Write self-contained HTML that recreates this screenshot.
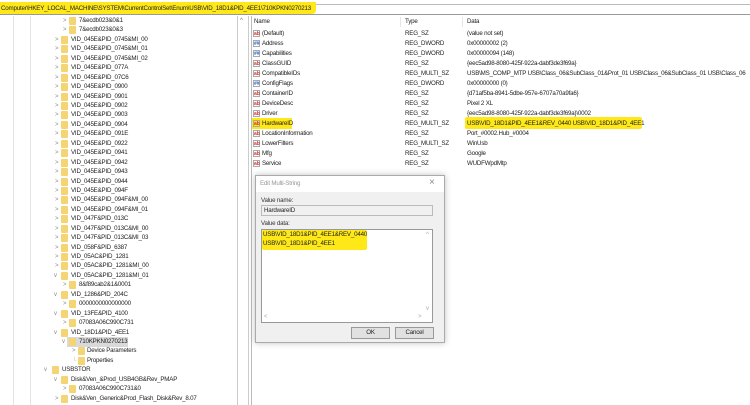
<!DOCTYPE html>
<html><head><meta charset="utf-8"><style>
body{margin:0;width:750px;height:405px;overflow:hidden;background:#fff;font-family:"Liberation Sans",sans-serif;font-size:6.2px;letter-spacing:-0.2px;color:#222;position:relative}
.a{position:absolute;white-space:nowrap}
.r{position:absolute;height:10px;line-height:10px;white-space:nowrap;left:0;width:236px}
.ch{position:absolute;color:#888;font-size:6px}
.f{position:absolute;top:1px;width:7px;height:8px;background:#f5d474;border-radius:1px}
.t{position:absolute}
.v{position:absolute;left:0;right:0;height:10px;line-height:10px;white-space:nowrap;overflow:hidden}
.ic{position:absolute;left:253px;top:1px;width:7px;height:7px;font-size:5px;line-height:7px;color:#c33;border:0.5px solid #aaa;box-sizing:border-box;text-align:center;font-weight:bold;letter-spacing:0}
.ic.b{color:#36c}
.n{position:absolute;left:262px}.ty{position:absolute;left:405px}.d{position:absolute;left:467px}
.hl{background:#ffe818}
</style></head><body>
<div class="a" style="left:0;top:4px;width:750px;height:11px;border-top:1px solid #bbb;border-bottom:1px solid #999;box-sizing:border-box"></div>
<div class="a hl" style="left:0;top:2px;width:316px;height:12px;border-radius:0 0 4px 0"></div>
<div class="a" style="left:1px;top:4px;line-height:10px">Computer\HKEY_LOCAL_MACHINE\SYSTEM\CurrentControlSet\Enum\USB\VID_18D1&amp;PID_4EE1\710KPKN0270213</div>
<div class="a" style="left:13px;top:16px;width:1px;height:389px;background:#e4e4e4"></div>
<div class="a" style="left:30px;top:16px;width:1px;height:389px;background:#e4e4e4"></div>
<div class="a" style="left:237px;top:16px;width:1px;height:389px;background:#ccc"></div>
<div class="a" style="left:240px;top:18px;color:#777;font-size:6px">^</div>
<div class="a" style="left:248px;top:16px;width:1px;height:389px;background:#ccc"></div>
<div class="a" style="left:251px;top:16px;width:1px;height:389px;background:#bbb"></div>

<div class="r" style="top:16px"><span class="ch" style="left:63px">&gt;</span><span class="f" style="left:69px"></span><span class="t" style="left:79px">7&amp;ecdb023&amp;0&amp;1</span></div>
<div class="r" style="top:25.4px"><span class="ch" style="left:63px">&gt;</span><span class="f" style="left:69px"></span><span class="t" style="left:79px">7&amp;ecdb023&amp;0&amp;3</span></div>
<div class="r" style="top:34.9px"><span class="ch" style="left:55px">&gt;</span><span class="f" style="left:61px"></span><span class="t" style="left:71px">VID_045E&amp;PID_0745&amp;MI_00</span></div>
<div class="r" style="top:44.3px"><span class="ch" style="left:55px">&gt;</span><span class="f" style="left:61px"></span><span class="t" style="left:71px">VID_045E&amp;PID_0745&amp;MI_01</span></div>
<div class="r" style="top:53.8px"><span class="ch" style="left:55px">&gt;</span><span class="f" style="left:61px"></span><span class="t" style="left:71px">VID_045E&amp;PID_0745&amp;MI_02</span></div>
<div class="r" style="top:63.2px"><span class="ch" style="left:55px">&gt;</span><span class="f" style="left:61px"></span><span class="t" style="left:71px">VID_045E&amp;PID_077A</span></div>
<div class="r" style="top:72.6px"><span class="ch" style="left:55px">&gt;</span><span class="f" style="left:61px"></span><span class="t" style="left:71px">VID_045E&amp;PID_07C6</span></div>
<div class="r" style="top:82.1px"><span class="ch" style="left:55px">&gt;</span><span class="f" style="left:61px"></span><span class="t" style="left:71px">VID_045E&amp;PID_0900</span></div>
<div class="r" style="top:91.5px"><span class="ch" style="left:55px">&gt;</span><span class="f" style="left:61px"></span><span class="t" style="left:71px">VID_045E&amp;PID_0901</span></div>
<div class="r" style="top:101px"><span class="ch" style="left:55px">&gt;</span><span class="f" style="left:61px"></span><span class="t" style="left:71px">VID_045E&amp;PID_0902</span></div>
<div class="r" style="top:110.4px"><span class="ch" style="left:55px">&gt;</span><span class="f" style="left:61px"></span><span class="t" style="left:71px">VID_045E&amp;PID_0903</span></div>
<div class="r" style="top:119.8px"><span class="ch" style="left:55px">&gt;</span><span class="f" style="left:61px"></span><span class="t" style="left:71px">VID_045E&amp;PID_0904</span></div>
<div class="r" style="top:129.3px"><span class="ch" style="left:55px">&gt;</span><span class="f" style="left:61px"></span><span class="t" style="left:71px">VID_045E&amp;PID_091E</span></div>
<div class="r" style="top:138.7px"><span class="ch" style="left:55px">&gt;</span><span class="f" style="left:61px"></span><span class="t" style="left:71px">VID_045E&amp;PID_0922</span></div>
<div class="r" style="top:148.2px"><span class="ch" style="left:55px">&gt;</span><span class="f" style="left:61px"></span><span class="t" style="left:71px">VID_045E&amp;PID_0941</span></div>
<div class="r" style="top:157.6px"><span class="ch" style="left:55px">&gt;</span><span class="f" style="left:61px"></span><span class="t" style="left:71px">VID_045E&amp;PID_0942</span></div>
<div class="r" style="top:167px"><span class="ch" style="left:55px">&gt;</span><span class="f" style="left:61px"></span><span class="t" style="left:71px">VID_045E&amp;PID_0943</span></div>
<div class="r" style="top:176.5px"><span class="ch" style="left:55px">&gt;</span><span class="f" style="left:61px"></span><span class="t" style="left:71px">VID_045E&amp;PID_0944</span></div>
<div class="r" style="top:185.9px"><span class="ch" style="left:55px">&gt;</span><span class="f" style="left:61px"></span><span class="t" style="left:71px">VID_045E&amp;PID_094F</span></div>
<div class="r" style="top:195.4px"><span class="ch" style="left:55px">&gt;</span><span class="f" style="left:61px"></span><span class="t" style="left:71px">VID_045E&amp;PID_094F&amp;MI_00</span></div>
<div class="r" style="top:204.8px"><span class="ch" style="left:55px">&gt;</span><span class="f" style="left:61px"></span><span class="t" style="left:71px">VID_045E&amp;PID_094F&amp;MI_01</span></div>
<div class="r" style="top:214.2px"><span class="ch" style="left:55px">&gt;</span><span class="f" style="left:61px"></span><span class="t" style="left:71px">VID_047F&amp;PID_013C</span></div>
<div class="r" style="top:223.7px"><span class="ch" style="left:55px">&gt;</span><span class="f" style="left:61px"></span><span class="t" style="left:71px">VID_047F&amp;PID_013C&amp;MI_00</span></div>
<div class="r" style="top:233.1px"><span class="ch" style="left:55px">&gt;</span><span class="f" style="left:61px"></span><span class="t" style="left:71px">VID_047F&amp;PID_013C&amp;MI_03</span></div>
<div class="r" style="top:242.6px"><span class="ch" style="left:55px">&gt;</span><span class="f" style="left:61px"></span><span class="t" style="left:71px">VID_058F&amp;PID_6387</span></div>
<div class="r" style="top:252px"><span class="ch" style="left:55px">&gt;</span><span class="f" style="left:61px"></span><span class="t" style="left:71px">VID_05AC&amp;PID_1281</span></div>
<div class="r" style="top:261.4px"><span class="ch" style="left:55px">&gt;</span><span class="f" style="left:61px"></span><span class="t" style="left:71px">VID_05AC&amp;PID_1281&amp;MI_00</span></div>
<div class="r" style="top:270.9px"><span class="ch" style="left:54px">v</span><span class="f" style="left:61px"></span><span class="t" style="left:71px">VID_05AC&amp;PID_1281&amp;MI_01</span></div>
<div class="r" style="top:280.3px"><span class="ch" style="left:63px">&gt;</span><span class="f" style="left:69px"></span><span class="t" style="left:79px">8&amp;f89cab2&amp;1&amp;0001</span></div>
<div class="r" style="top:289.8px"><span class="ch" style="left:54px">v</span><span class="f" style="left:61px"></span><span class="t" style="left:71px">VID_1286&amp;PID_204C</span></div>
<div class="r" style="top:299.2px"><span class="ch" style="left:63px">&gt;</span><span class="f" style="left:69px"></span><span class="t" style="left:79px">0000000000000000</span></div>
<div class="r" style="top:308.6px"><span class="ch" style="left:54px">v</span><span class="f" style="left:61px"></span><span class="t" style="left:71px">VID_13FE&amp;PID_4100</span></div>
<div class="r" style="top:318.1px"><span class="ch" style="left:63px">&gt;</span><span class="f" style="left:69px"></span><span class="t" style="left:79px">07083A06C990C731</span></div>
<div class="r" style="top:327.5px"><span class="ch" style="left:54px">v</span><span class="f" style="left:61px"></span><span class="t" style="left:71px">VID_18D1&amp;PID_4EE1</span></div>
<div class="r" style="top:337px"><span class="a" style="left:67px;top:0;width:61px;height:10px;background:#d9d9d9"></span><span class="ch" style="left:62px">v</span><span class="f" style="left:69px"></span><span class="t" style="left:79px">710KPKN0270213</span></div>
<div class="r" style="top:346.4px"><span class="ch" style="left:72px">&gt;</span><span class="f" style="left:78px"></span><span class="t" style="left:87px">Device Parameters</span></div>
<div class="r" style="top:355.8px"><span class="ch" style="left:72px;color:#bbb">└</span><span class="f" style="left:78px"></span><span class="t" style="left:87px">Properties</span></div>
<div class="r" style="top:365.3px"><span class="ch" style="left:44px">v</span><span class="f" style="left:52px"></span><span class="t" style="left:62px">USBSTOR</span></div>
<div class="r" style="top:374.7px"><span class="ch" style="left:54px">v</span><span class="f" style="left:61px"></span><span class="t" style="left:71px">Disk&amp;Ven_&amp;Prod_USB4GB&amp;Rev_PMAP</span></div>
<div class="r" style="top:384.2px"><span class="ch" style="left:63px">&gt;</span><span class="f" style="left:69px"></span><span class="t" style="left:79px">07083A06C990C731&amp;0</span></div>
<div class="r" style="top:393.6px"><span class="ch" style="left:55px">&gt;</span><span class="f" style="left:61px"></span><span class="t" style="left:71px">Disk&amp;Ven_Generic&amp;Prod_Flash_Disk&amp;Rev_8.07</span></div>

<div class="v" style="top:17px"><span class="n" style="left:254px">Name</span><span class="ty">Type</span><span class="d">Data</span></div>
<div class="a" style="left:400px;top:17px;width:1px;height:10px;background:#e5e5e5"></div>
<div class="a" style="left:462px;top:17px;width:1px;height:10px;background:#e5e5e5"></div>
<div class="v" style="top:29px"><span class="ic">ab</span><span class="n">(Default)</span><span class="ty">REG_SZ</span><span class="d">(value not set)</span></div>
<div class="v" style="top:39px"><span class="ic b">##</span><span class="n">Address</span><span class="ty">REG_DWORD</span><span class="d">0x00000002 (2)</span></div>
<div class="v" style="top:49px"><span class="ic b">##</span><span class="n">Capabilities</span><span class="ty">REG_DWORD</span><span class="d">0x00000094 (148)</span></div>
<div class="v" style="top:59px"><span class="ic">ab</span><span class="n">ClassGUID</span><span class="ty">REG_SZ</span><span class="d">{eec5ad98-8080-425f-922a-dabf3de3f69a}</span></div>
<div class="v" style="top:69px"><span class="ic">ab</span><span class="n">CompatibleIDs</span><span class="ty">REG_MULTI_SZ</span><span class="d">USB\MS_COMP_MTP USB\Class_06&amp;SubClass_01&amp;Prot_01 USB\Class_06&amp;SubClass_01 USB\Class_06</span></div>
<div class="v" style="top:79px"><span class="ic b">##</span><span class="n">ConfigFlags</span><span class="ty">REG_DWORD</span><span class="d">0x00000000 (0)</span></div>
<div class="v" style="top:89px"><span class="ic">ab</span><span class="n">ContainerID</span><span class="ty">REG_SZ</span><span class="d">{d71af5ba-8941-5dbe-957e-6707a70a9fa6}</span></div>
<div class="v" style="top:99px"><span class="ic">ab</span><span class="n">DeviceDesc</span><span class="ty">REG_SZ</span><span class="d">Pixel 2 XL</span></div>
<div class="v" style="top:109px"><span class="ic">ab</span><span class="n">Driver</span><span class="ty">REG_SZ</span><span class="d">{eec5ad98-8080-425f-922a-dabf3de3f69a}\0002</span></div>
<div class="a hl" style="left:252px;top:118px;width:40px;height:11px"></div>
<div class="a hl" style="left:465px;top:117px;width:177px;height:12px;border-radius:2px"></div>
<div class="v" style="top:119px"><span class="ic">ab</span><span class="n">HardwareID</span><span class="ty">REG_MULTI_SZ</span><span class="d">USB\VID_18D1&amp;PID_4EE1&amp;REV_0440 USB\VID_18D1&amp;PID_4EE1</span></div>
<div class="v" style="top:129px"><span class="ic">ab</span><span class="n">LocationInformation</span><span class="ty">REG_SZ</span><span class="d">Port_#0002.Hub_#0004</span></div>
<div class="v" style="top:139px"><span class="ic">ab</span><span class="n">LowerFilters</span><span class="ty">REG_MULTI_SZ</span><span class="d">WinUsb</span></div>
<div class="v" style="top:149px"><span class="ic">ab</span><span class="n">Mfg</span><span class="ty">REG_SZ</span><span class="d">Google</span></div>
<div class="v" style="top:159px"><span class="ic">ab</span><span class="n">Service</span><span class="ty">REG_SZ</span><span class="d">WUDFWpdMtp</span></div>

<div class="a" style="left:255px;top:175px;width:190px;height:168px;background:#f0f0f0;border:1px solid #aaa;box-sizing:border-box;box-shadow:0 0 6px rgba(0,0,0,.25)"></div>
<div class="a" style="left:256px;top:176px;width:188px;height:16px;background:#fff"></div>
<div class="a" style="left:260px;top:180px;color:#999">Edit Multi-String</div>
<div class="a" style="left:429px;top:177px;color:#888;font-size:10px">×</div>
<div class="a" style="left:261px;top:197px;color:#333">Value name:</div>
<div class="a" style="left:261px;top:205px;width:172px;height:11px;border:1px solid #bbb;background:#f0f0f0;box-sizing:border-box;line-height:9px;padding-left:2px">HardwareID</div>
<div class="a" style="left:261px;top:220px;color:#333">Value data:</div>
<div class="a" style="left:261px;top:229px;width:172px;height:94px;border:1px solid #999;background:#fff;box-sizing:border-box"></div>
<div class="a hl" style="left:262px;top:230px;width:105px;height:20px;border-radius:2px"></div>
<div class="a" style="left:263px;top:231px;line-height:8.5px">USB\VID_18D1&amp;PID_4EE1&amp;REV_0440<br>USB\VID_18D1&amp;PID_4EE1</div>
<div class="a" style="left:426px;top:232px;color:#aaa;font-size:6px">^</div>
<div class="a" style="left:426px;top:306px;color:#aaa;font-size:6px">v</div>
<div class="a" style="left:264px;top:314px;color:#aaa;font-size:6px">&lt;</div>
<div class="a" style="left:418px;top:314px;color:#aaa;font-size:6px">&gt;</div>
<div class="a" style="left:351px;top:327px;width:39px;height:12px;border:1px solid #999;background:#e1e1e1;box-sizing:border-box;text-align:center;line-height:10px">OK</div>
<div class="a" style="left:395px;top:327px;width:39px;height:12px;border:1px solid #999;background:#e1e1e1;box-sizing:border-box;text-align:center;line-height:10px">Cancel</div>
</body></html>
